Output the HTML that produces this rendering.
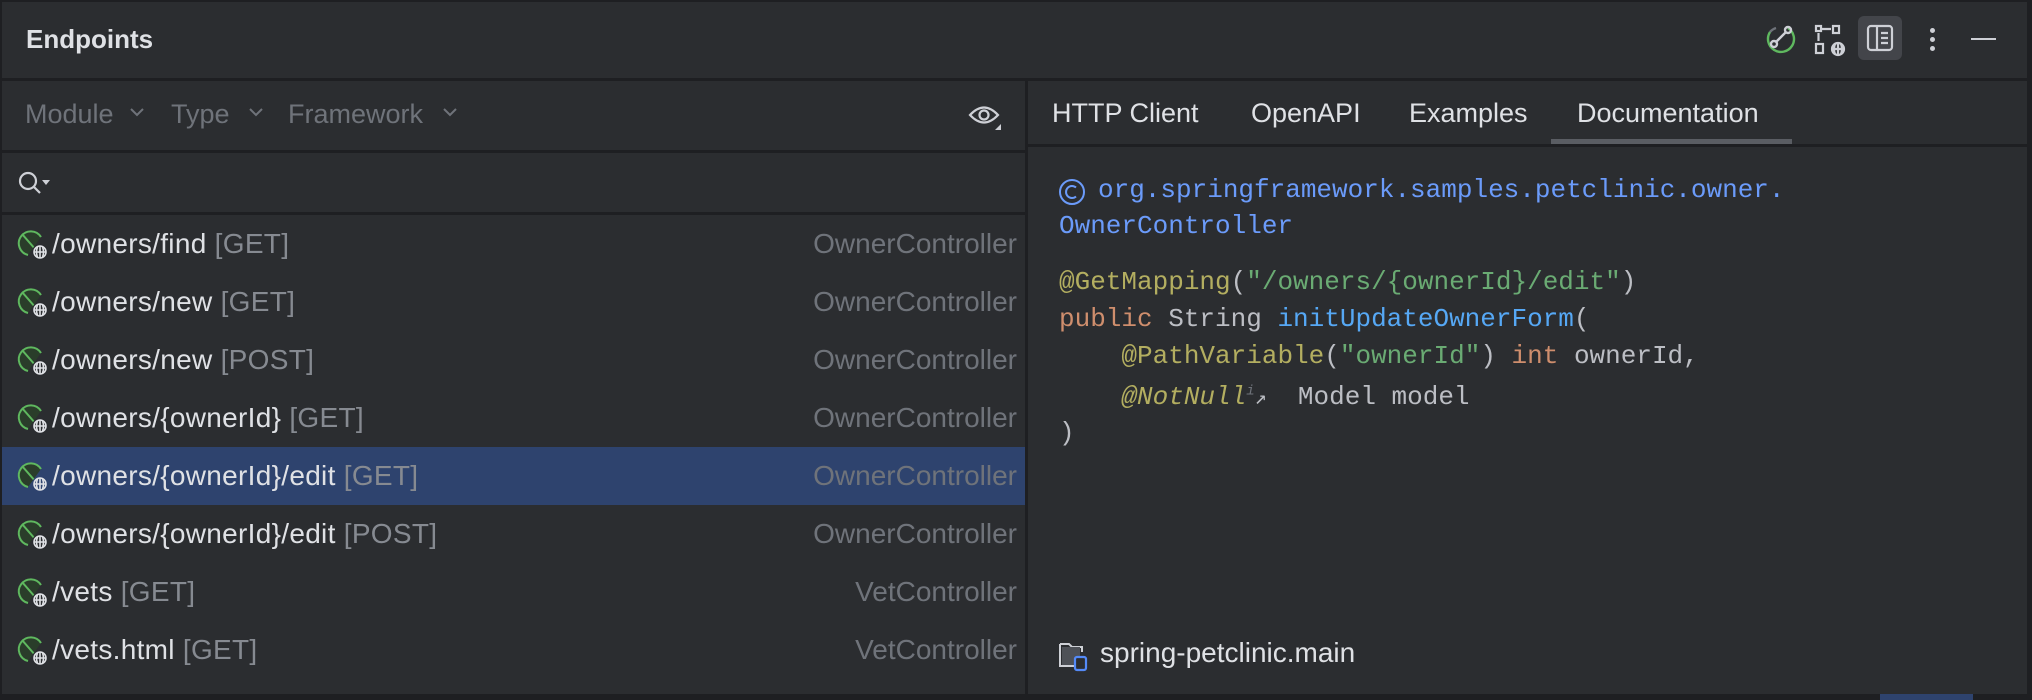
<!DOCTYPE html>
<html><head><meta charset="utf-8"><style>
*{margin:0;padding:0;box-sizing:border-box}
body{width:2032px;height:700px;background:#1e1f22;overflow:hidden;font-family:"Liberation Sans",sans-serif;position:relative}
.win{position:absolute;left:2px;top:2px;width:2025px;height:692px;background:#2b2d30}
.abs{position:absolute}
.hl{position:absolute;height:3px;background:#1e1f22}
.t{position:absolute;white-space:nowrap;font-size:27px;line-height:30px}
.row{position:absolute;left:0;width:1023px;height:58px}
.row .p{position:absolute;left:50px;top:13px;font-size:28px;letter-spacing:0.3px;color:#dfe1e5;white-space:nowrap}
.row .p span{color:#868a91}
.row .c{position:absolute;right:8px;top:13px;font-size:28px;color:#6f737a}
.row svg{position:absolute;left:14px;top:13px}
.code{position:absolute;left:1057px;font-family:"Liberation Mono",monospace;font-size:26px;color:#bcbec4;white-space:pre}
.kw{color:#cf8e6d}.an{color:#b3ae60}.st{color:#6aab73}.fn{color:#56a8f5}.cl{color:#6b9bfa}
</style></head><body>
<div class="win">
<div class="t" style="left:24px;top:22px;font-weight:bold;font-size:26px;color:#dfe1e5">Endpoints</div>
<svg class="abs" style="left:1760px;top:20px" width="36" height="36" viewBox="0 0 36 36" fill="none" stroke-width="2.4"><path d="M8 10 A13 13 0 1 0 26 6" stroke="#5fb85f"/><path d="M8 10 A13 13 0 0 1 14 6" stroke="#6f737a"/><circle cx="12" cy="22" r="3" stroke="#ced0d6"/><circle cx="26" cy="8" r="3" stroke="#ced0d6"/><path d="M14 20 L24 10" stroke="#ced0d6"/></svg>
<svg class="abs" style="left:1812px;top:22px" width="34" height="34" viewBox="0 0 34 34" fill="none" stroke="#ced0d6" stroke-width="2.2"><rect x="2" y="2" width="5" height="5"/><rect x="19" y="2" width="6" height="7"/><path d="M8 5h9M4.5 9v8"/><rect x="2" y="20" width="7" height="9"/><circle cx="24" cy="25" r="6"/><path d="M18 25h12M24 19v12M21 20q-2 5 0 10M27 20q2 5 0 10"/></svg>
<div class="abs" style="left:1856px;top:14px;width:44px;height:44px;background:#43454a;border-radius:6px"></div>
<svg class="abs" style="left:1864px;top:22px" width="28" height="28" viewBox="0 0 28 28" fill="none" stroke="#ced0d6" stroke-width="2.2"><rect x="2" y="2" width="24" height="24" rx="3"/><path d="M11 2v24M15 9h7M15 14h7M15 19h7"/></svg>
<div class="abs" style="left:1928px;top:26px;width:5px;height:5px;border-radius:50%;background:#ced0d6"></div>
<div class="abs" style="left:1928px;top:35px;width:5px;height:5px;border-radius:50%;background:#ced0d6"></div>
<div class="abs" style="left:1928px;top:44px;width:5px;height:5px;border-radius:50%;background:#ced0d6"></div>
<div class="abs" style="left:1969px;top:36px;width:25px;height:2px;background:#ced0d6"></div>
<div class="hl" style="left:0;top:76px;width:2025px"></div>
<div class="t" style="left:23px;top:97px;color:#6f737a">Module</div>
<svg class="abs" style="left:127px;top:104px" width="16" height="12"><path d="M2 3l6 6 6-6" fill="none" stroke="#6f737a" stroke-width="2"/></svg>
<div class="t" style="left:169px;top:97px;color:#6f737a">Type</div>
<svg class="abs" style="left:246px;top:104px" width="16" height="12"><path d="M2 3l6 6 6-6" fill="none" stroke="#6f737a" stroke-width="2"/></svg>
<div class="t" style="left:286px;top:97px;color:#6f737a">Framework</div>
<svg class="abs" style="left:440px;top:104px" width="16" height="12"><path d="M2 3l6 6 6-6" fill="none" stroke="#6f737a" stroke-width="2"/></svg>
<svg class="abs" style="left:966px;top:100px" width="36" height="30" viewBox="0 0 36 30" fill="none" stroke="#ced0d6" stroke-width="2.2"><path d="M2 13 Q16 -2 30 13 Q16 28 2 13Z"/><circle cx="16" cy="13" r="4.5"/><path d="M33 22v6h-6z" fill="#ced0d6" stroke="none"/></svg>
<div class="hl" style="left:0;top:148px;width:1023px"></div>
<svg class="abs" style="left:13px;top:167px" width="40" height="30" viewBox="0 0 40 30" fill="none" stroke="#ced0d6" stroke-width="2.2"><circle cx="13" cy="12" r="8"/><path d="M19 18l6 6"/><path d="M27 11h8l-4 5z" fill="#ced0d6" stroke="none"/></svg>
<div class="hl" style="left:0;top:210px;width:1023px"></div>
<div class="row" style="top:213px"><svg width="34" height="34" viewBox="0 0 34 34"><path d="M25 9 A12 12 0 1 0 12 27" fill="#2a3d2a" stroke="#5fb85f" stroke-width="2"/><path d="M6 6L20 22" stroke="#5fb85f" stroke-width="2"/><circle cx="24" cy="24" r="8" fill="#2b2d30"/><g fill="none" stroke="#dfe1e5" stroke-width="1.6"><circle cx="24" cy="24" r="6"/><path d="M18 24h12M24 18v12M21.5 19q-2 5 0 10M26.5 19q2 5 0 10"/></g></svg><div class="p">/owners/find <span>[GET]</span></div><div class="c">OwnerController</div></div>
<div class="row" style="top:271px"><svg width="34" height="34" viewBox="0 0 34 34"><path d="M25 9 A12 12 0 1 0 12 27" fill="#2a3d2a" stroke="#5fb85f" stroke-width="2"/><path d="M6 6L20 22" stroke="#5fb85f" stroke-width="2"/><circle cx="24" cy="24" r="8" fill="#2b2d30"/><g fill="none" stroke="#dfe1e5" stroke-width="1.6"><circle cx="24" cy="24" r="6"/><path d="M18 24h12M24 18v12M21.5 19q-2 5 0 10M26.5 19q2 5 0 10"/></g></svg><div class="p">/owners/new <span>[GET]</span></div><div class="c">OwnerController</div></div>
<div class="row" style="top:329px"><svg width="34" height="34" viewBox="0 0 34 34"><path d="M25 9 A12 12 0 1 0 12 27" fill="#2a3d2a" stroke="#5fb85f" stroke-width="2"/><path d="M6 6L20 22" stroke="#5fb85f" stroke-width="2"/><circle cx="24" cy="24" r="8" fill="#2b2d30"/><g fill="none" stroke="#dfe1e5" stroke-width="1.6"><circle cx="24" cy="24" r="6"/><path d="M18 24h12M24 18v12M21.5 19q-2 5 0 10M26.5 19q2 5 0 10"/></g></svg><div class="p">/owners/new <span>[POST]</span></div><div class="c">OwnerController</div></div>
<div class="row" style="top:387px"><svg width="34" height="34" viewBox="0 0 34 34"><path d="M25 9 A12 12 0 1 0 12 27" fill="#2a3d2a" stroke="#5fb85f" stroke-width="2"/><path d="M6 6L20 22" stroke="#5fb85f" stroke-width="2"/><circle cx="24" cy="24" r="8" fill="#2b2d30"/><g fill="none" stroke="#dfe1e5" stroke-width="1.6"><circle cx="24" cy="24" r="6"/><path d="M18 24h12M24 18v12M21.5 19q-2 5 0 10M26.5 19q2 5 0 10"/></g></svg><div class="p">/owners/{ownerId} <span>[GET]</span></div><div class="c">OwnerController</div></div>
<div class="row" style="top:445px;background:#2e436e"><svg width="34" height="34" viewBox="0 0 34 34"><path d="M25 9 A12 12 0 1 0 12 27" fill="#2a3d2a" stroke="#5fb85f" stroke-width="2"/><path d="M6 6L20 22" stroke="#5fb85f" stroke-width="2"/><circle cx="24" cy="24" r="8" fill="#2e436e"/><g fill="none" stroke="#dfe1e5" stroke-width="1.6"><circle cx="24" cy="24" r="6"/><path d="M18 24h12M24 18v12M21.5 19q-2 5 0 10M26.5 19q2 5 0 10"/></g></svg><div class="p">/owners/{ownerId}/edit <span>[GET]</span></div><div class="c">OwnerController</div></div>
<div class="row" style="top:503px"><svg width="34" height="34" viewBox="0 0 34 34"><path d="M25 9 A12 12 0 1 0 12 27" fill="#2a3d2a" stroke="#5fb85f" stroke-width="2"/><path d="M6 6L20 22" stroke="#5fb85f" stroke-width="2"/><circle cx="24" cy="24" r="8" fill="#2b2d30"/><g fill="none" stroke="#dfe1e5" stroke-width="1.6"><circle cx="24" cy="24" r="6"/><path d="M18 24h12M24 18v12M21.5 19q-2 5 0 10M26.5 19q2 5 0 10"/></g></svg><div class="p">/owners/{ownerId}/edit <span>[POST]</span></div><div class="c">OwnerController</div></div>
<div class="row" style="top:561px"><svg width="34" height="34" viewBox="0 0 34 34"><path d="M25 9 A12 12 0 1 0 12 27" fill="#2a3d2a" stroke="#5fb85f" stroke-width="2"/><path d="M6 6L20 22" stroke="#5fb85f" stroke-width="2"/><circle cx="24" cy="24" r="8" fill="#2b2d30"/><g fill="none" stroke="#dfe1e5" stroke-width="1.6"><circle cx="24" cy="24" r="6"/><path d="M18 24h12M24 18v12M21.5 19q-2 5 0 10M26.5 19q2 5 0 10"/></g></svg><div class="p">/vets <span>[GET]</span></div><div class="c">VetController</div></div>
<div class="row" style="top:619px"><svg width="34" height="34" viewBox="0 0 34 34"><path d="M25 9 A12 12 0 1 0 12 27" fill="#2a3d2a" stroke="#5fb85f" stroke-width="2"/><path d="M6 6L20 22" stroke="#5fb85f" stroke-width="2"/><circle cx="24" cy="24" r="8" fill="#2b2d30"/><g fill="none" stroke="#dfe1e5" stroke-width="1.6"><circle cx="24" cy="24" r="6"/><path d="M18 24h12M24 18v12M21.5 19q-2 5 0 10M26.5 19q2 5 0 10"/></g></svg><div class="p">/vets.html <span>[GET]</span></div><div class="c">VetController</div></div>
<div class="abs" style="left:1023px;top:76px;width:3px;height:616px;background:#1e1f22"></div>
<div class="t" style="left:1050px;top:96px;color:#dfe1e5">HTTP Client</div>
<div class="t" style="left:1249px;top:96px;color:#dfe1e5">OpenAPI</div>
<div class="t" style="left:1407px;top:96px;color:#dfe1e5">Examples</div>
<div class="t" style="left:1575px;top:96px;color:#dfe1e5">Documentation</div>
<div class="abs" style="left:1549px;top:137px;width:241px;height:5px;background:#5a5d63"></div>
<div class="hl" style="left:1026px;top:142px;width:999px"></div>
<svg class="abs" style="left:1055px;top:175px" width="30" height="30" viewBox="0 0 30 30" fill="none" stroke="#6b9bfa" stroke-width="2"><circle cx="15" cy="15" r="12"/><path d="M19 10.5a6 6 0 1 0 0 9"/></svg>
<div class="code cl" style="left:1096px;top:173px">org.springframework.samples.petclinic.owner.</div>
<div class="code cl" style="top:209px">OwnerController</div>
<div class="code" style="top:265px"><span class="an">@GetMapping</span>(<span class="st">"/owners/{ownerId}/edit"</span>)</div>
<div class="code" style="top:302px"><span class="kw">public</span> String <span class="fn">initUpdateOwnerForm</span>(</div>
<div class="code" style="top:339px">    <span class="an">@PathVariable</span>(<span class="st">"ownerId"</span>) <span class="kw">int</span> ownerId,</div>
<div class="code" style="top:380px">    <span class="an" style="font-style:italic">@NotNull</span><sup style="font-size:14px;color:#6f737a;font-style:italic">i</sup><span style="font-size:20px">↗</span>  Model model</div>
<div class="code" style="top:416px">)</div>
<svg class="abs" style="left:1056px;top:638px" width="32" height="32" viewBox="0 0 32 32" fill="none"><path d="M2 4h9l3 3h10v5" stroke="#ced0d6" stroke-width="2"/><path d="M2 4v22h15" stroke="#ced0d6" stroke-width="2" fill="none"/><rect x="4" y="7" width="18" height="18" fill="#4e5157" stroke="none"/><rect x="17" y="17" width="11" height="13" rx="2" stroke="#548af7" stroke-width="2.2" fill="#2b2d30"/></svg>
<div class="t" style="left:1098px;top:636px;font-size:28px;color:#dfe1e5">spring-petclinic.main</div>
</div>
<div class="abs" style="left:1880px;top:694px;width:93px;height:6px;background:#2e436e"></div>
</body></html>
